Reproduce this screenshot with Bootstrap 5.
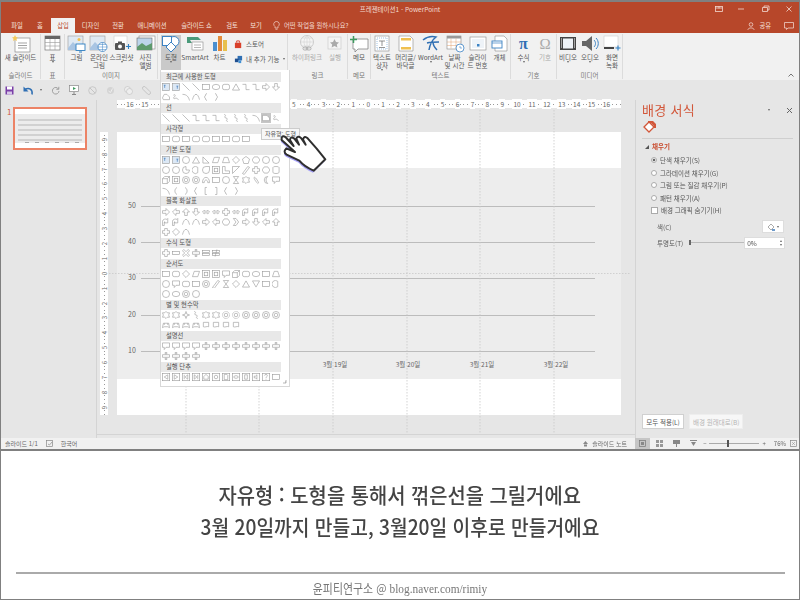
<!doctype html>
<html lang="ko">
<head>
<meta charset="utf-8">
<title>프레젠테이션1 - PowerPoint</title>
<link href="https://cdn.jsdelivr.net/npm/bootstrap@5.3.0/dist/css/bootstrap.min.css" rel="stylesheet">
<style>
html,body{margin:0;width:800px;height:600px;overflow:hidden;background:#fff}
body{font-family:"Noto Sans CJK KR","Liberation Sans",sans-serif;font-size:6.5px;line-height:8px;color:#555}
svg{display:block}
.shot{width:800px;height:600px;border:1px solid #808080;border-top-width:2px;position:relative;display:flex;flex-direction:column;filter:blur(.35px)}
.ttl{height:16px;background:#b7472a;color:#f3d9d0;position:relative;flex:none}
.ttl-t{text-align:center;font-size:6.5px;line-height:15px}
.winb{position:absolute;right:4px;top:3px;gap:12px}
.tabs{height:15px;background:#b7472a;color:#f6e2dc;font-size:6.3px;line-height:15px;flex:none;padding-left:4px}
.tabs>span{text-align:center;flex:none}
.tabs .on{background:#f1f1f1;color:#b7472a}
.t18{width:22px}.t24{width:24px}.t31{width:31px}.t44{width:44px}.t45{width:45px}.t26{width:26px}
.hint{margin-left:6px;color:#f3d9d0}
.usr{margin-left:auto;padding-right:5px;gap:13px}
.rib{height:47px;background:#f1f1f1;flex:none;position:relative}
.grp{display:flex;flex-direction:column;border-right:1px solid #dcdcdc;height:45px;margin-top:1px;flex:none}
.gtools{display:flex;height:36px;flex:none;padding-top:1px}
.glbl{text-align:center;color:#777;line-height:8px;margin-top:1px}
.tl{display:flex;flex-direction:column;align-items:center;flex:none;text-align:center;white-space:nowrap;height:35px}
.tl svg{flex:none}
.tl.dim{color:#aaa}
.tl.act{background:#c9c9c9}
.sym{font-family:"Liberation Serif",serif;font-size:16px;line-height:18px;height:18px;font-weight:700;color:#2f6fb3;display:block;flex:none}
.sym2{font-weight:400;color:#aaa;font-size:15px}
.crt{display:inline-block;width:0;height:0;border-left:1.5px solid transparent;border-right:1.5px solid transparent;border-top:2px solid #666;vertical-align:middle}
.g1{width:40px}.g2{width:24px}.g3{width:93px}.g4{width:130px}.g5{width:60px}.g6{width:23px}.g7{width:140px}.g8{width:46px}.g9{width:66px}
.w18{width:20px}.w21{width:21px}.w22{width:22px}.w23{width:23px}.w25{width:25px}.w28{width:28px}.w34{width:34px}.w39{width:39px}
.pl3{padding-left:3px}.pl2{padding-left:2px}
.stc{width:58px;padding:3px 0 0 4px;gap:3px}
.stc>div{gap:3px;height:12px;white-space:nowrap}
.coll{position:absolute;right:5px;bottom:3px}
.qat{height:20px;background:#e6e6e6;padding-left:4px;gap:5px;flex:none}
.work{height:338px;background:#e6e6e6;flex:none;position:relative;display:flex}
.thm{width:96px;border-right:1px solid #d4d4d4;flex:none;display:flex;padding:7px 0 0 6px;gap:2px}
.thm-n{color:#d2573a;font-size:8px;line-height:10px}
.thm-b{width:74px;height:43px;border:2px solid #ec8366;background:#fff;flex:none;overflow:hidden}
.edt{width:538px;flex:none;position:relative;border-bottom:1px solid #d4d4d4;height:335px}
.hrul{margin-left:20px;width:504px;height:8px;background:#fff;display:flex;padding-left:5.5px;font-size:6.5px;line-height:8px;color:#666;background-image:repeating-linear-gradient(90deg,#999 0 1px,transparent 1px 3.725px);background-size:100% 1px;background-position:0 4px;background-repeat:no-repeat}
.hrul span{flex:0 0 14.9px;text-align:center}
.hrul b{font-weight:400;background:#fff;padding:0 1px}
.srow{margin:24px 0 0 3px;display:flex;gap:9px}
.vrul{width:8px;height:283px;background:#fff;display:flex;flex-direction:column;font-size:6px;color:#666;background-image:repeating-linear-gradient(0deg,#999 0 1px,transparent 1px 3.725px);background-size:1px 100%;background-position:4px 0;background-repeat:no-repeat}
.vrul span{flex:1 1 0;display:flex;align-items:center;justify-content:center}
.vrul b{font-weight:400;background:#fff;line-height:7px;writing-mode:vertical-rl;transform:rotate(180deg)}
.sld{width:504px;height:283px;background:#fff;flex:none}
.guides{position:absolute;left:0;top:0;pointer-events:none}
.pan{width:165px;flex:none;border-left:1px solid #d4d4d4;position:relative;padding:0 7px 0 6px;display:flex;flex-direction:column}
.pan-h{height:20px;flex:none}
.pan-t{font-size:13px;line-height:20px;color:#d2573a;letter-spacing:.3px}
.pan-i{height:19px;flex:none;padding:0 0 0 1px;border-bottom:1px solid #cfcfcf}
.sec{color:#c8482a;font-weight:700;height:15px;line-height:15px;gap:3px;padding-left:3px;flex:none}
.opt{height:12.5px;padding-left:9px;gap:3px;flex:none;margin:0;min-height:0}
.opt .form-check-input{width:6px;height:6px;margin:0;float:none;border-color:#aaa;background-color:#fff;flex:none;background-image:none}
.opt .form-check-input:checked{background-color:#fff;border-color:#aaa;background-image:radial-gradient(circle,#666 0 1.5px,transparent 1.6px)}
.opt .form-check-input[type=checkbox]{width:7px;height:7px;border-radius:0}
.opt label{line-height:8px}
.fld{height:16px;flex:none;padding-left:15px;white-space:nowrap}
.fld1{margin-top:2px}
.clr{width:22px;height:13px;background:#fff;border:1px solid #ddd;margin-left:auto;margin-right:9px;gap:2px}
.sldr{width:55px;height:1px;background:#bbb;margin-left:6px;position:relative;flex:none}
.knob{position:absolute;left:0;top:-2px;width:2px;height:5px;background:#666}
.spn{width:41px;height:12px;background:#fff;border:1px solid #ddd;padding:0 2px;margin-left:auto;margin-right:9px;flex:none;justify-content:space-between}
.spn i{display:flex;flex-direction:column;gap:2px}
.upc{display:block;width:0;height:0;border-left:1.5px solid transparent;border-right:1.5px solid transparent;border-bottom:2px solid #666}
.acts{position:absolute;left:6px;top:314px;gap:5px}
.acts .btn{font-size:6.5px;line-height:8px;padding:3px 3px;border-radius:0;background:#fff;border:1px solid #d0d0d0;color:#555;height:15px;white-space:nowrap;width:42px}
.acts .btn.off{border-color:#eee;color:#b5b5b5;width:54px;opacity:1;background:#f7f7f7}
.stat{height:11px;background:#f1f1f1;flex:none;line-height:11px;font-size:6px;color:#666;padding-left:4px;position:relative}
.s-r{margin-left:auto;padding-right:2px}
.vw{width:15px;height:11px;display:flex;align-items:center;justify-content:center;margin-right:2px}
.vw.on{background:#c6c6c6}
.zm{width:50px;height:1px;background:#aaa;position:relative;margin:0 3px}
.zm i{position:absolute;left:18px;top:-3px;height:7px;width:2px;background:#555}
.bar{height:2px;background:#808080;flex:none}
.cap{flex:1 1 0;background:#fff;display:flex;flex-direction:column;align-items:center;position:relative}
.ln{font-size:21px;font-weight:500;line-height:32px;color:#444;white-space:nowrap}
.ln1{margin-top:27px;transform:scaleX(.945)}
.ln2{transform:scaleX(.915)}
.rule{position:absolute;left:15px;right:14px;top:121px;height:2px;background:#aaa}
.cred{position:absolute;left:0;right:0;top:129px;text-align:center;font-size:13px;line-height:16px;color:#777;white-space:nowrap;transform:scaleX(.84)}
.cred span{font-family:"Liberation Serif",serif;font-size:13.5px}
.gal{position:absolute;left:159px;top:68px;width:130px;height:317px;background:#fff;border:1px solid #d8d8d8;border-top:0;z-index:5;padding-top:2px}
.gh{width:120px;height:10px;background:#e8e8e8;line-height:10px;padding-left:5px;color:#555;font-size:6.3px}
.gs{margin-bottom:.5px;width:120px}
.gr{display:flex;height:10.3px;align-items:center}
.gr svg{width:10px;height:10px;flex:none;padding:.6px}
.gr svg.sel{background:#c6c6c6}
.grip{position:absolute;right:2px;bottom:2px}
.tip{position:absolute;left:260px;top:126px;width:39px;height:12px;background:#f7f7f7;border:1px solid #ccc;z-index:6;font-size:6px;line-height:10px;text-align:center;color:#555}
.hand{position:absolute;left:270px;top:118px;z-index:7}
</style>
</head>
<body>
<svg width="0" height="0" class="position-absolute">
<symbol id="i-new" viewBox="0 0 20 18"><rect x="4" y="3" width="15" height="14" fill="#fff" stroke="#8a8a8a" stroke-width=".7"/><path d="M7 8h9M7 10.5h9M7 13h9" stroke="#999" stroke-width=".9"/><path d="M4 0l1 2 2 .4-1.5 1.4.4 2.2L4 5 2.100 6l.4-2.200L1 2.400 3 2z" fill="#f4c95d"/></symbol>
<symbol id="i-tbl" viewBox="0 0 20 18"><rect x="2" y="1" width="15" height="14" fill="#fff" stroke="#777" stroke-width=".7"/><rect x="2" y="1" width="15" height="3" fill="#666"/><path d="M7 4v11M12 4v11M2 7.500h15M2 11h15" stroke="#999" stroke-width=".6"/></symbol>
<symbol id="i-pic" viewBox="0 0 20 18"><rect x="1" y="1" width="15" height="14" fill="#dfe9f3" stroke="#999" stroke-width=".6"/><path d="M1 13l5-6 4 4 6-3v7H1z" fill="#a9c5e3"/><circle cx="12" cy="4.500" r="1.500" fill="#f2c14e"/><rect x="9" y="9" width="9" height="6.500" fill="#fff" stroke="#2f7fc1" stroke-width=".9"/><path d="M12 17h3" stroke="#2f7fc1" stroke-width="1"/></symbol>
<symbol id="i-onl" viewBox="0 0 20 18"><rect x="1" y="1" width="15" height="14" fill="#dfe9f3" stroke="#999" stroke-width=".6"/><path d="M1 13l5-6 4 4 6-3v7H1z" fill="#a9c5e3"/><circle cx="13.500" cy="12" r="4.500" fill="#fff" stroke="#3c83c4" stroke-width=".8"/><path d="M9 12h9M13.500 7.500v9M10 9.500h7M10 14.500h7" stroke="#3c83c4" stroke-width=".5"/></symbol>
<symbol id="i-scr" viewBox="0 0 20 18"><rect x="2" y="1" width="13" height="10" fill="#fff" stroke="#ccc" stroke-width=".6"/><rect x="3" y="8" width="10" height="7" rx="1" fill="#555"/><rect x="6" y="6.500" width="4" height="2" fill="#555"/><circle cx="8" cy="11.500" r="2" fill="#fff"/><path d="M16.500 9v5M14 11.500h5" stroke="#2f7fc1" stroke-width="1.100"/></symbol>
<symbol id="i-alb" viewBox="0 0 20 18"><rect x="3" y="1" width="16" height="13" fill="#fff" stroke="#888" stroke-width=".6"/><rect x="1" y="3" width="15" height="12" fill="#bcd4ea" stroke="#666" stroke-width=".6"/><path d="M1 12l5-4 4 3 6-3v7H1z" fill="#5e9a6d"/></symbol>
<symbol id="i-shp" viewBox="0 0 20 18"><circle cx="13" cy="6.500" r="5" fill="#fff" stroke="#3c83c4" stroke-width="1"/><rect x="1.500" y="1.500" width="9" height="9" fill="#fff" stroke="#3c83c4" stroke-width="1"/><path d="M10 7l5 5-5 5-5-5z" fill="#fff" stroke="#3c83c4" stroke-width="1"/></symbol>
<symbol id="i-sma" viewBox="0 0 20 18"><path d="M2 2h11l3 3H5l2 3H2z" fill="#4a9a7a"/><rect x="7" y="7" width="11" height="8" fill="#fff" stroke="#888" stroke-width=".6"/><path d="M9 10h7M9 12.500h7" stroke="#999" stroke-width=".7"/></symbol>
<symbol id="i-cht" viewBox="0 0 20 18"><rect x="3" y="7" width="4" height="9" fill="#4a8fd0"/><rect x="8" y="1" width="4" height="15" fill="#e38a3a"/><rect x="13" y="5" width="4" height="11" fill="#e8c04c"/></symbol>
<symbol id="i-sto" viewBox="0 0 10 10"><path d="M1 3h7v6H1z" fill="#d9402a"/><path d="M3 3V1h3v2" fill="none" stroke="#d9402a"/></symbol>
<symbol id="i-add" viewBox="0 0 10 10"><rect x="4" y="1" width="5" height="5" fill="#2f6fb3"/><rect x="1" y="4" width="4" height="4" fill="#1f4f8f"/><rect x="5" y="6" width="3" height="3" fill="#3f8fd3"/></symbol>
<symbol id="i-lnk" viewBox="0 0 20 18"><circle cx="10" cy="7" r="6.500" fill="#f4f4f4" stroke="#bbb" stroke-width=".7"/><path d="M3.500 7h13M10 .5v13M5 3h10M5 11h10M10 .5c-4 4-4 9 0 13M10 .5c4 4 4 9 0 13" fill="none" stroke="#ccc" stroke-width=".5"/><rect x="6" y="12" width="4.500" height="3" rx="1.500" fill="none" stroke="#aaa" stroke-width=".9"/><rect x="9.500" y="12" width="4.500" height="3" rx="1.500" fill="none" stroke="#aaa" stroke-width=".9"/></symbol>
<symbol id="i-act" viewBox="0 0 20 18"><rect x="3" y="2" width="13" height="12" fill="#f4f4f4" stroke="#ccc" stroke-width=".7"/><path d="M9.500 4l1.500 3 3 .4-2.200 2.100.6 3-2.900-1.500-2.900 1.500.6-3L5 7.400 8 7z" fill="#aaa"/></symbol>
<symbol id="i-mem" viewBox="0 0 20 18"><path d="M4 4h15v10H9l-3 3v-3H4z" fill="#fff" stroke="#777" stroke-width=".7"/><path d="M4.500 1v7M1 4.500h7" stroke="#3f9a5f" stroke-width="1.500"/></symbol>
<symbol id="i-txt" viewBox="0 0 20 18"><rect x="3" y="1" width="14" height="15" fill="#fff" stroke="#8a8a8a" stroke-width=".6"/><rect x="5" y="3" width="10" height="11" fill="none" stroke="#3c83c4" stroke-width=".5" stroke-dasharray="1 1"/><path d="M7 6h6M10 6v5M7 12.500h6" stroke="#666" stroke-width=".7"/></symbol>
<symbol id="i-hdr" viewBox="0 0 20 18"><path d="M3 1h11l3 3v12H3z" fill="#fff" stroke="#8a8a8a" stroke-width=".6"/><rect x="5" y="3" width="10" height="2.500" fill="#f0c050"/><rect x="5" y="12" width="10" height="2.500" fill="#f0c050"/></symbol>
<symbol id="i-wa" viewBox="0 0 20 18"><path d="M2 5c5-4 9-4 13-3-4 3-6 7-7 13M6 8c4-1 8-1 12-1M12 7c0 3 2 6 4 8" fill="none" stroke="#2f6fb3" stroke-width="1.500"/></symbol>
<symbol id="i-dat" viewBox="0 0 20 18"><rect x="2" y="1" width="14" height="13" fill="#fff" stroke="#888" stroke-width=".6"/><rect x="2" y="1" width="14" height="2.500" fill="#999"/><path d="M6 3.500v10M11 3.500v10M2 7h14M2 10.500h14" stroke="#e0a070" stroke-width=".5"/><circle cx="15" cy="13" r="4" fill="#fff" stroke="#3c83c4" stroke-width=".8"/><path d="M15 11v2h2" fill="none" stroke="#3c83c4" stroke-width=".6"/></symbol>
<symbol id="i-num" viewBox="0 0 20 18"><rect x="2" y="2" width="16" height="13" fill="#fff" stroke="#8a8a8a" stroke-width=".6"/><rect x="4" y="4" width="12" height="9" fill="#eef3f8"/><rect x="9" y="9" width="2.500" height="2.500" fill="#3c83c4"/></symbol>
<symbol id="i-obj" viewBox="0 0 20 18"><path d="M5 1h9l3 3v12H5z" fill="#fff" stroke="#8a8a8a" stroke-width=".6"/><rect x="2" y="6" width="10" height="7" fill="#fff" stroke="#3c83c4" stroke-width=".9"/><path d="M2 8h10" stroke="#3c83c4" stroke-width=".7"/></symbol>
<symbol id="i-vid" viewBox="0 0 20 18"><rect x="2" y="2" width="16" height="13" fill="#444"/><rect x="5" y="3.500" width="10" height="10" fill="#eef2f6"/><path d="M3.500 3.500v10M16.500 3.500v10" stroke="#fff" stroke-width="1" stroke-dasharray="1 1"/></symbol>
<symbol id="i-aud" viewBox="0 0 20 18"><path d="M2 6h4l6-5v15l-6-5H2z" fill="#666"/><path d="M14 5c2 2 2 5 0 7M16 3c3 3 3 8 0 11" fill="none" stroke="#3c83c4" stroke-width="1"/></symbol>
<symbol id="i-rec" viewBox="0 0 20 18"><rect x="2" y="1" width="14" height="11" fill="#fff" stroke="#ccc" stroke-width=".6"/><path d="M2 13h10" stroke="#444" stroke-width="2"/><path d="M16 10.500v5M13.500 13h5" stroke="#2f7fc1" stroke-width="1.100"/></symbol>
</svg>

<div class="shot">
  <div class="ttl">
    <div class="ttl-t">프레젠테이션1 - PowerPoint</div>
    <div class="winb d-flex align-items-center">
      <svg width="8" height="8" viewBox="0 0 8 8"><rect x=".5" y="1.500" width="7" height="5" fill="none" stroke="#f3d9d0" stroke-width=".8"/><path d="M.5 3h7M4 1.500v2" stroke="#f3d9d0" stroke-width=".8"/></svg>
      <svg width="12" height="8" viewBox="0 0 12 8"><path d="M3 4h6" stroke="#f3d9d0" stroke-width=".8"/></svg>
      <svg width="12" height="8" viewBox="0 0 12 8"><path d="M3.500 2.500h5v4h-5zM5 2.500V1h5v4H8.500" fill="none" stroke="#f3d9d0" stroke-width=".8"/></svg>
      <svg width="12" height="8" viewBox="0 0 12 8"><path d="M3.500 1.500l5 5M8.500 1.500l-5 5" stroke="#f3d9d0" stroke-width=".8"/></svg>
    </div>
  </div>
  <div class="tabs d-flex align-items-center">
    <span class="t24">파일</span><span class="t18">홈</span><span class="t24 on">삽입</span><span class="t31">디자인</span><span class="t24">전환</span><span class="t44">애니메이션</span><span class="t45">슬라이드 쇼</span><span class="t26">검토</span><span class="t18">보기</span>
    <span class="hint d-flex align-items-center gap-1"><svg width="7" height="9" viewBox="0 0 7 9"><path d="M3.500.5a2.700 2.700 0 0 0-1.500 5v1.500h3V5.500a2.700 2.700 0 0 0-1.500-5zM2.500 8.300h2" fill="none" stroke="#f3d9d0" stroke-width=".7"/></svg>어떤 작업을 원하시나요?</span>
    <span class="usr d-flex align-items-center">
      <span class="d-flex align-items-center gap-1"><svg width="8" height="8" viewBox="0 0 8 8"><circle cx="4" cy="2.500" r="1.800" fill="none" stroke="#f6e2dc" stroke-width=".7"/><path d="M.8 7.800c.5-2.500 5.900-2.500 6.400 0" fill="none" stroke="#f6e2dc" stroke-width=".7"/></svg>공유</span>
      <svg width="10" height="8" viewBox="0 0 10 8"><path d="M.5.500h9v5.500H4L2.500 7.500V6H.5z" fill="none" stroke="#f6e2dc" stroke-width=".7"/></svg>
    </span>
  </div>
  <div class="rib d-flex">
    <div class="grp g1"><div class="gtools"><div class="tl w39"><svg width="20" height="18"><use href="#i-new"/></svg>새 슬라이드<br><span class="crt"></span></div></div><div class="glbl">슬라이드</div></div>
    <div class="grp g2"><div class="gtools"><div class="tl w23"><svg width="20" height="18"><use href="#i-tbl"/></svg>표<br><span class="crt"></span></div></div><div class="glbl">표</div></div>
    <div class="grp g3"><div class="gtools">
      <div class="tl w23"><svg width="20" height="18"><use href="#i-pic"/></svg>그림</div>
      <div class="tl w22"><svg width="20" height="18"><use href="#i-onl"/></svg>온라인<br>그림</div>
      <div class="tl w23"><svg width="20" height="18"><use href="#i-scr"/></svg>스크린샷<br><span class="crt"></span></div>
      <div class="tl w25"><svg width="20" height="18"><use href="#i-alb"/></svg>사진<br>앨범 <span class="crt"></span></div>
    </div><div class="glbl">이미지</div></div>
    <div class="grp g4"><div class="gtools pl3">
      <div class="tl w18 act"><svg width="20" height="18"><use href="#i-shp"/></svg>도형<br><span class="crt"></span></div>
      <div class="tl w28"><svg width="20" height="18"><use href="#i-sma"/></svg>SmartArt</div>
      <div class="tl w21"><svg width="20" height="18"><use href="#i-cht"/></svg>차트</div>
      <div class="stc d-flex flex-column">
        <div class="d-flex align-items-center"><svg width="9" height="9"><use href="#i-sto"/></svg>스토어</div>
        <div class="d-flex align-items-center"><svg width="9" height="9"><use href="#i-add"/></svg>내 추가 기능 <span class="crt"></span></div>
      </div>
    </div><div class="glbl"></div></div>
    <div class="grp g5"><div class="gtools pl2">
      <div class="tl w34 dim"><svg width="20" height="18"><use href="#i-lnk"/></svg>하이퍼링크</div>
      <div class="tl w22 dim"><svg width="20" height="18"><use href="#i-act"/></svg>실행</div>
    </div><div class="glbl">링크</div></div>
    <div class="grp g6"><div class="gtools"><div class="tl w22"><svg width="20" height="18"><use href="#i-mem"/></svg>메모</div></div><div class="glbl">메모</div></div>
    <div class="grp g7"><div class="gtools">
      <div class="tl w22"><svg width="20" height="18"><use href="#i-txt"/></svg>텍스트<br>상자 <span class="crt"></span></div>
      <div class="tl w25"><svg width="20" height="18"><use href="#i-hdr"/></svg>머리글/<br>바닥글</div>
      <div class="tl w25"><svg width="20" height="18"><use href="#i-wa"/></svg>WordArt<br><span class="crt"></span></div>
      <div class="tl w23"><svg width="20" height="18"><use href="#i-dat"/></svg>날짜<br>및 시간</div>
      <div class="tl w23"><svg width="20" height="18"><use href="#i-num"/></svg>슬라이<br>드 번호</div>
      <div class="tl w21"><svg width="20" height="18"><use href="#i-obj"/></svg>개체</div>
    </div><div class="glbl">텍스트</div></div>
    <div class="grp g8"><div class="gtools pl2">
      <div class="tl w21"><span class="sym">π</span>수식<br><span class="crt"></span></div>
      <div class="tl w22 dim"><span class="sym sym2">Ω</span>기호</div>
    </div><div class="glbl">기호</div></div>
    <div class="grp g9"><div class="gtools">
      <div class="tl w22"><svg width="20" height="18"><use href="#i-vid"/></svg>비디오<br><span class="crt"></span></div>
      <div class="tl w22"><svg width="20" height="18"><use href="#i-aud"/></svg>오디오<br><span class="crt"></span></div>
      <div class="tl w22"><svg width="20" height="18"><use href="#i-rec"/></svg>화면<br>녹화</div>
    </div><div class="glbl">미디어</div></div>
    <svg class="coll" width="6" height="4" viewBox="0 0 6 4"><path d="M.5 3.500L3 1l2.500 2.500" fill="none" stroke="#666" stroke-width=".9"/></svg>
  </div>
  <div class="qat d-flex align-items-center">
    <svg width="9" height="9" viewBox="0 0 9 9"><rect x=".5" y=".5" width="8" height="8" fill="#7a3fa8"/><rect x="2" y=".5" width="5" height="3" fill="#fff"/><rect x="2" y="5.500" width="5" height="3" fill="#d8c8e8"/></svg>
    <svg class="ms-1" width="12" height="9" viewBox="0 0 12 9"><path d="M2 3.500c4-2.500 8 0 7 5" fill="none" stroke="#2f6fb3" stroke-width="1.500"/><path d="M.5 .5v5h5z" fill="#2f6fb3"/></svg>
    <span class="crt"></span>
    <svg class="ms-1" width="9" height="9" viewBox="0 0 9 9"><path d="M7.500 3a3.300 3.300 0 1 0 .5 2M7.800 .8v2.500H5.300" fill="none" stroke="#999" stroke-width=".9"/></svg>
    <svg class="ms-1" width="10" height="10" viewBox="0 0 10 10"><rect x=".5" y=".5" width="9" height="6" fill="#fff" stroke="#888" stroke-width=".7"/><path d="M5 7v2M3 9.500h4" stroke="#888"/><path d="M4 2l3 1.500L4 5z" fill="#3f9a5f"/></svg>
    <svg class="ms-1" width="9" height="9" viewBox="0 0 9 9"><circle cx="4.500" cy="4.500" r="3.800" fill="none" stroke="#c4c4c4" stroke-width=".9"/><path d="M2 2l5 5" stroke="#c4c4c4"/></svg>
    <svg class="ms-1" width="9" height="9" viewBox="0 0 9 9"><circle cx="4.500" cy="4.500" r="3.500" fill="#d4d4d4"/><path d="M2.500 5l2 1.500 2-4" fill="none" stroke="#eee"/></svg>
    <svg class="ms-1" width="9" height="9" viewBox="0 0 9 9"><circle cx="3.500" cy="3.500" r="3" fill="#eee" stroke="#c4c4c4" stroke-width=".7"/><circle cx="5.500" cy="5.500" r="3" fill="#eee" stroke="#c4c4c4" stroke-width=".7"/></svg>
    <svg class="ms-1" width="9" height="9" viewBox="0 0 9 9"><rect x="-.5" y="2.800" width="10" height="3.400" rx="1.700" transform="rotate(45 4.500 4.500)" fill="none" stroke="#c4c4c4" stroke-width=".9"/></svg>
    <svg class="ms-1" width="9" height="9" viewBox="0 0 9 9"><circle cx="3.300" cy="3.300" r="2.800" fill="none" stroke="#bbb" stroke-width=".7"/><circle cx="5.700" cy="5.700" r="2.800" fill="#ddd" stroke="#bbb" stroke-width=".7"/></svg>
    <span class="crt ms-1"></span>
  </div>
  <div class="work">
    <div class="thm">
      <div class="thm-n">1</div>
      <div class="thm-b">
        <svg width="70" height="39" viewBox="0 0 70 39"><rect y="5" width="70" height="29" fill="#ececec"/><path d="M3 11h64M3 16h64M3 21h64M3 26h64M3 31h64" stroke="#aaa" stroke-width=".8"/><path d="M10 33.500h4M20 33.500h4M30 33.500h4M40 33.500h4M50 33.500h4M60 33.500h4" stroke="#aaa"/></svg>
      </div>
    </div>
    <div class="edt">
      <div class="hrul" id="hr"></div>
      <div class="srow">
        <div class="vrul" id="vr"></div>
        <div class="sld">
          <svg width="504" height="283" viewBox="0 0 504 283" font-family="Noto Sans CJK KR,sans-serif" fill="#666">
            <rect y="36" width="504" height="211" fill="#ededed"/>
            <g stroke="#bcbcbc" stroke-width="1"><path d="M24 74.500h454M24 110.500h454M24 146.500h454M24 183.500h454M24 219.500h454"/></g>
            <g font-size="7"><text x="11" y="76">50</text><text x="11" y="112">40</text><text x="11" y="148">30</text><text x="11" y="185">20</text><text x="11" y="221">10</text></g>
            <g font-size="6.500" text-anchor="middle"><text x="218" y="235">3월 19일</text><text x="291" y="235">3월 20일</text><text x="365" y="235">3월 21일</text><text x="439" y="235">3월 22일</text></g>
          </svg>
        </div>
      </div>
      <svg class="guides" width="538" height="335" viewBox="0 0 538 335"><g stroke="#c8c8c8" stroke-width=".8" stroke-dasharray="1.500 1.500" fill="none"><path d="M89 10V334M162 10V334M236 10V334M310 10V334M383 10V334M457 10V334"/><path d="M12 173.500H534"/></g></svg>
    </div>
    <div class="pan">
      <div class="pan-h d-flex align-items-center">
        <span class="pan-t">배경 서식</span>
        <span class="crt ms-auto"></span>
        <svg class="ms-3" width="7" height="7" viewBox="0 0 7 7"><path d="M1 1l5 5M6 1l-5 5" stroke="#666"/></svg>
      </div>
      <div class="pan-i"><svg width="13" height="13" viewBox="0 0 13 13"><path d="M1 7l5-5 5 5-5 5z" fill="#fff" stroke="#d2573a" stroke-width="1.300"/><path d="M5 1h5l3 3v4h-2V6L8 3H5z" fill="#d2573a"/></svg></div>
      <div class="sec d-flex align-items-center"><svg width="4" height="4" viewBox="0 0 4 4"><path d="M0 4h4V0z" fill="#555"/></svg>채우기</div>
      <div class="form-check opt d-flex align-items-center"><input class="form-check-input" type="radio" checked id="r1" name="f"><label for="r1">단색 채우기(S)</label></div>
      <div class="form-check opt d-flex align-items-center"><input class="form-check-input" type="radio" id="r2" name="f"><label for="r2">그라데이션 채우기(G)</label></div>
      <div class="form-check opt d-flex align-items-center"><input class="form-check-input" type="radio" id="r3" name="f"><label for="r3">그림 또는 질감 채우기(P)</label></div>
      <div class="form-check opt d-flex align-items-center"><input class="form-check-input" type="radio" id="r4" name="f"><label for="r4">패턴 채우기(A)</label></div>
      <div class="form-check opt d-flex align-items-center"><input class="form-check-input" type="checkbox" id="r5"><label for="r5">배경 그래픽 숨기기(H)</label></div>
      <div class="fld fld1 d-flex align-items-center"><span>색(C)</span><span class="clr d-flex align-items-center justify-content-center"><svg width="8" height="8" viewBox="0 0 8 8"><path d="M1 4l3-3 3 3-3 3z" fill="#fff" stroke="#888" stroke-width=".7"/><path d="M5 7h3" stroke="#2f6fb3" stroke-width="1.400"/></svg><span class="crt"></span></span></div>
      <div class="fld d-flex align-items-center"><span>투명도(T)</span><span class="sldr"><span class="knob"></span></span><span class="spn d-flex align-items-center">0%<i><span class="upc"></span><span class="crt"></span></i></span></div>
      <div class="acts d-flex"><button class="btn" type="button">모두 적용(L)</button><button class="btn off" type="button">배경 원래대로(B)</button></div>
    </div>
  </div>
  <div class="stat d-flex align-items-center">
    <span>슬라이드 1/1</span>
    <svg class="ms-2" width="7" height="7" viewBox="0 0 7 7"><rect x=".5" y=".5" width="6" height="6" fill="none" stroke="#888" stroke-width=".7"/><path d="M2 4l1.500 1L6 2" fill="none" stroke="#888" stroke-width=".7"/></svg>
    <span class="ms-2">한국어</span>
    <span class="s-r d-flex align-items-center">
      <svg class="me-1" width="5" height="6" viewBox="0 0 5 6"><path d="M2.500 0L5 3H0z M1 3.500h3v2H1z" fill="#888"/></svg><span class="me-2">슬라이드 노트</span>
      <span class="vw on"><svg width="7" height="7" viewBox="0 0 7 7"><rect x=".5" y=".5" width="6" height="6" fill="none" stroke="#777" stroke-width=".7"/><rect x="2" y="2" width="3" height="3" fill="#888"/></svg></span>
      <span class="vw"><svg width="7" height="7" viewBox="0 0 7 7"><path d="M0 0h3v3H0zM4 0h3v3H4zM0 4h3v3H0zM4 4h3v3H4z" fill="#999"/></svg></span>
      <span class="vw"><svg width="7" height="7" viewBox="0 0 7 7"><path d="M0 0h7v4H0zM3 4h1v3H3z" fill="#888"/></svg></span>
      <span class="vw"><svg width="7" height="7" viewBox="0 0 7 7"><path d="M0 0h7v1H0zM1 2h5L3.500 6z" fill="#888"/></svg></span>
      <span>−</span><span class="zm"><i></i></span><span>+</span><span class="ms-2 me-1">76%</span>
      <svg width="7" height="7" viewBox="0 0 7 7"><rect x=".5" y=".5" width="6" height="6" fill="none" stroke="#888" stroke-width=".7"/><path d="M2 2l3 3M5 2L2 5" stroke="#888" stroke-width=".5"/></svg>
    </span>
  </div>
  <div class="bar"></div>
  <div class="cap">
    <div class="ln ln1">자유형 : 도형을 통해서 꺾은선을 그릴거에요</div>
    <div class="ln ln2">3월 20일까지 만들고, 3월20일 이후로 만들거에요</div>
    <div class="rule"></div>
    <div class="cred">윤피티연구소 @ <span>blog.naver.com/rimiy</span></div>
  </div>

  <div class="gal" id="gal">
    <div class="gs"><div class="gh">최근에 사용한 도형</div><div class="gr" data-s="T U l l r e R t z z a d"></div><div class="gr" data-s="f w c n b B"></div></div>
    <div class="gs"><div class="gh">선</div><div class="gr" data-s="l l l z z z s s s c F w"></div></div>
    <div class="gs"><div class="gh">사각형</div><div class="gr" data-s="r R r R R r r R r"></div></div>
    <div class="gs"><div class="gh">기본 도형</div><div class="gr" data-s="T U o t v P J k p h o o"></div><div class="gr" data-s="o o C D K Q L G X + h y"></div><div class="gr" data-s="E Q O O N r o H Y W M q"></div><div class="gr" data-s="c ( ) b [ ] { }"></div></div>
    <div class="gs"><div class="gh">블록 화살표</div><div class="gr" data-s="a A u d x x + x Z Z Z Z"></div><div class="gr" data-s="Z Z n n a A h > a d A u"></div><div class="gr" data-s="+ k n"></div></div>
    <div class="gs"><div class="gh">수식 도형</div><div class="gr" data-s="+ - * / = #"></div></div>
    <div class="gs"><div class="gh">순서도</div><div class="gr" data-s="r R k P Q Q q E R e r J"></div><div class="gr" data-s="o q R r O X H k t V r D"></div><div class="gr" data-s="o e O o"></div></div>
    <div class="gs"><div class="gh">별 및 현수막</div><div class="gr" data-s="Y Y 4 s Y Y S S O O O O"></div><div class="gr" data-s="I I I I % % % %"></div></div>
    <div class="gs"><div class="gh">설명선</div><div class="gr" data-s="q q q q / / / / / / / /"></div><div class="gr" data-s="/ / / /"></div></div>
    <div class="gs"><div class="gh">실행 단추</div><div class="gr" data-s="1 2 3 4b 5 6 7 8 9 0 ? r"></div></div>
    <svg class="grip" width="5" height="5" viewBox="0 0 5 5"><path d="M4 1v3H1M4 3H3" fill="none" stroke="#999" stroke-width=".7"/></svg>
  </div>
  <div class="tip">자유형: 도형</div>
  <svg class="hand" width="70" height="60" viewBox="0 0 210 180">
    <path d="M32 52Q38 44 46 54L68 78 57 60Q58 48 70 56L84 74 76 56Q80 46 90 54L104 74 96 58Q100 46 110 55L137 86 163 118 128 152Q100 140 85 122L47 104Q35 96 46 85L72 96 32 60Z" fill="#a5a0f5" transform="translate(-2 6)"/>
    <path d="M32 52Q38 44 46 54L68 78 57 60Q58 48 70 56L84 74 76 56Q80 46 90 54L104 74 96 58Q100 46 110 55L137 86 163 118 128 152Q100 140 85 122L47 104Q35 96 46 85L72 96 32 60Z" fill="#fff" stroke="#2f2f2f" stroke-width="6" stroke-linejoin="round"/>
  </svg>
</div>

<script src="https://cdn.jsdelivr.net/npm/bootstrap@5.3.0/dist/js/bootstrap.bundle.min.js"></script>
<script>
(function(){
 var hr=document.getElementById('hr'),vr=document.getElementById('vr'),h='',v='',i;
 for(i=-16;i<=16;i++){h+=(i>=-14&&i<=-6)?'<span></span>':'<span><b>'+Math.abs(i)+'</b></span>';}
 hr.innerHTML=h;
 for(i=-9;i<=9;i++){v+='<span><b>'+Math.abs(i)+'</b></span>';}
 vr.innerHTML=v;
 var s={
 T:'<rect x="1" y="1" width="8" height="8" fill="#dce8f5"/><path d="M2.500 3h2M3.500 3v3" stroke="#2f6fb3"/>',
 U:'<rect x="1" y="1" width="8" height="8" fill="#dce8f5"/><path d="M5.500 4h2M6.500 4v3" stroke="#2f6fb3"/>',
 l:'<path d="M1 1l8 8"/>',r:'<rect x="1" y="2" width="8" height="6"/>',R:'<rect x="1" y="2" width="8" height="6" rx="2"/>',
 o:'<circle cx="5" cy="5" r="4"/>',e:'<ellipse cx="5" cy="5" rx="4.300" ry="3"/>',t:'<path d="M5 1.500l4 7H1z"/>',v:'<path d="M1.500 1.500v7h7z"/>',
 z:'<path d="M1 2h4v6h4"/>',a:'<path d="M1 3.500h4V1l4 4-4 4V6.500H1z"/>',A:'<path d="M9 3.500H5V1L1 5l4 4V6.500h4z"/>',d:'<path d="M3.500 1v4H1l4 4 4-4H6.500V1z"/>',u:'<path d="M3.500 9V5H1l4-4 4 4H6.500v4z"/>',
 f:'<path d="M1 6l2-4h3l3 3v3H2z"/>',F:'<path d="M1 8V2h5l3 3v3z"/>',w:'<path d="M2 3c2-2 3 1 1 2s0 3 2 1l3 2"/>',c:'<path d="M1 2c5 0 7 3 8 7"/>',n:'<path d="M1 8c2-8 6-8 8 0"/>',
 b:'<path d="M6 1C4 1 5 4.500 3 5c2 .5 1 4 3 4"/>',B:'<path d="M4 1c2 0 1 3.500 3 4-2 .5-1 4-3 4"/>','{':'<path d="M6 1C4 1 5 4.500 3 5c2 .5 1 4 3 4"/>','}':'<path d="M4 1c2 0 1 3.500 3 4-2 .5-1 4-3 4"/>',
 '(':'<path d="M6 1C3 3 3 7 6 9"/>',')':'<path d="M4 1c3 2 3 6 0 8"/>','[':'<path d="M6 1H4v8h2"/>',']':'<path d="M4 1h2v8H4"/>',
 s:'<path d="M3 1c4 1-2 3 2 4s-2 3 2 4"/>',P:'<path d="M3 2h6L7 8H1z"/>',J:'<path d="M3 2h4l2 6H1z"/>',k:'<path d="M5 1l4 4-4 4-4-4z"/>',p:'<path d="M5 1l4 3-1.500 5h-5L1 4z"/>',h:'<path d="M3 1.500h4L9.500 5 7 8.500H3L.5 5z"/>',
 C:'<path d="M5 5V1a4 4 0 1 0 4 4z"/>',D:'<path d="M7 2a4 4 0 1 0 0 6z"/>',K:'<path d="M5 1h4v4a4 4 0 1 1-4-4z"/>',Q:'<rect x="1" y="1" width="8" height="8"/><rect x="3" y="3" width="4" height="4"/>',L:'<path d="M1 1h3v5h5v3H1z"/>',G:'<path d="M1 9V1h8L5 5z"/>',X:'<path d="M1 9L7 1l2 1-6 8z"/>','+':'<path d="M3.500 1h3v2.500H9v3H6.500V9h-3V6.500H1v-3h2.500z"/>',
 y:'<ellipse cx="5" cy="2.500" rx="3.500" ry="1.500"/><path d="M1.500 2.500v5c0 2 7 2 7 0v-5"/>',E:'<path d="M1 3.500L3.500 1H9v5.500L6.500 9H1zM1 3.500h5.500V9M6.500 3.500L9 1"/>',O:'<circle cx="5" cy="5" r="4"/><circle cx="5" cy="5" r="2"/>',N:'<path d="M1 8c0-8 8-8 8 0H7C7 4 3 4 3 8z"/>',H:'<path d="M2 1h6L2 9h6z"/>',Y:'<path d="M5 1l1.500 1.500L9 2.500 8 5l1 2.500-2.500 0L5 9 3.500 7.500 1 7.500 2 5 1 2.500l2.500 0z"/>',W:'<path d="M3 2c1-1 4 4 5 6l-1 1C5 7 2 3 3 2z"/>',M:'<path d="M7 1a4 4 0 1 0 0 8 5 5 0 0 1 0-8z"/>',q:'<path d="M1 1.500h8v5H5L3 9V6.500H1z"/>',V:'<path d="M1 1.500h8l-4 7z"/>',
 S:'<circle cx="5" cy="5" r="4" stroke-dasharray="1 .5"/><circle cx="5" cy="5" r="2"/>','4':'<path d="M5 1l1 3 3 1-3 1-1 3-1-3-3-1 3-1z"/>',
 I:'<path d="M2 3h6l1 5-2-1H3L1 8zM3 3v2M7 3v2"/>','%':'<path d="M2 2h6v5c-2-1-4 1-6 0z"/>',
 '-':'<rect x="1" y="3.500" width="8" height="3"/>','*':'<path d="M2.500 1L5 3.500 7.500 1 9 2.500 6.500 5 9 7.500 7.500 9 5 6.500 2.500 9 1 7.500 3.500 5 1 2.500z"/>','/':'<path d="M1 3.500h8v3H1zM4 1h2v1.500H4zM4 7.500h2V9H4z"/>','=':'<rect x="1" y="2" width="8" height="2.500"/><rect x="1" y="5.500" width="8" height="2.500"/>','#':'<rect x="1" y="2" width="8" height="2.500"/><rect x="1" y="5.500" width="8" height="2.500"/><path d="M6 1L4 9"/>',
 x:'<path d="M1 5l2-2v1h4V3l2 2-2 2V6H3v1z"/>',Z:'<path d="M1 9V4c0-2 4-3 5-2l1-1v5H3l1-1C3 4 3 5 3 9z"/>','>':'<path d="M2 1h3l3 4-3 4H2l3-4z"/>',
 '1':'<rect x=".8" y=".8" width="8.400" height="8.400"/><path d="M7 2.500v5L3 5z"/>','2':'<rect x=".8" y=".8" width="8.400" height="8.400"/><path d="M3 2.500v5L7 5z"/>','3':'<rect x=".8" y=".8" width="8.400" height="8.400"/><path d="M7 2.500v5L4 5zM3 2.500v5"/>','4b':'<rect x=".8" y=".8" width="8.400" height="8.400"/><path d="M3 2.500v5L6 5zM7 2.500v5"/>','5':'<rect x=".8" y=".8" width="8.400" height="8.400"/><path d="M5 2L2.500 4.500v3h5v-3z"/>','6':'<rect x=".8" y=".8" width="8.400" height="8.400"/><circle cx="5" cy="5" r="2"/>','7':'<rect x=".8" y=".8" width="8.400" height="8.400"/><path d="M3 2h3l1 1v5H3z"/>','8':'<rect x=".8" y=".8" width="8.400" height="8.400"/><ellipse cx="5" cy="5" rx="2.500" ry="1.500"/>','9':'<rect x=".8" y=".8" width="8.400" height="8.400"/><path d="M3.500 2.500h3v5h-3z"/>','0':'<rect x=".8" y=".8" width="8.400" height="8.400"/><path d="M3 4h1.500L6 2.500v5L4.500 6H3z"/>','?':'<rect x=".8" y=".8" width="8.400" height="8.400"/><path d="M3.500 3.500c0-2 3-2 3 0 0 1.500-1.500 1-1.500 2.500M5 7v1"/>'
 };
 document.querySelectorAll('.gr').forEach(function(row){
  var out='',head=row.parentNode.firstChild.textContent;
  row.getAttribute('data-s').split(' ').forEach(function(c,ix){
   var sel=head==='선'&&ix===10;
   out+='<svg viewBox="0 0 10 10"'+(sel?' class="sel"':'')+' fill="#fff" stroke="#999" stroke-width=".7">'+(s[c]||s.r)+'</svg>';
  });
  row.innerHTML=out;
 });
})();
</script>
</body>
</html>
